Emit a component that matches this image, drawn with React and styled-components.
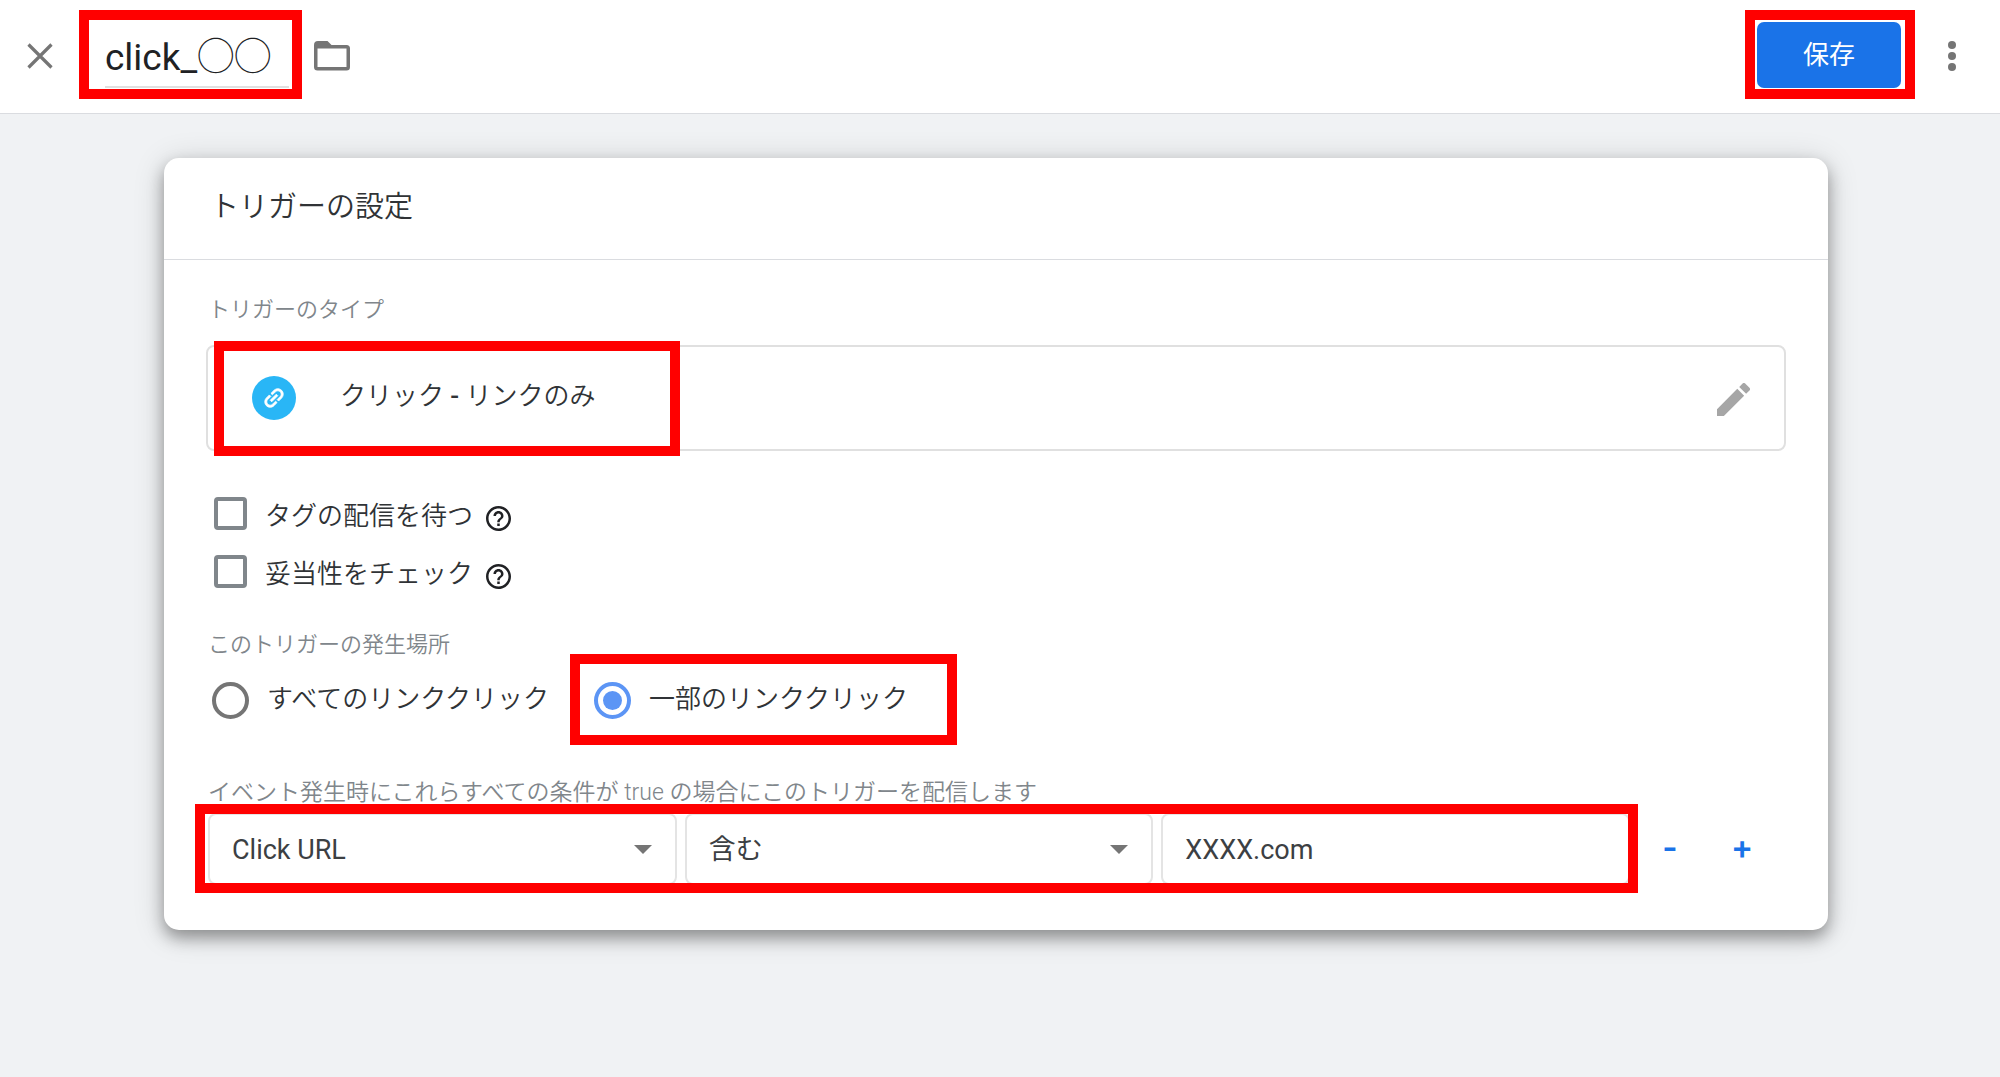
import React from "react";
import styled, { createGlobalStyle } from 'styled-components'

const GlobalStyle = createGlobalStyle`
  * {
    box-sizing: border-box;
  }
  body {
    margin: 0;
    background: #f0f2f4;
    color: #303336;
    font-family: Roboto, "Noto Sans CJK JP", sans-serif;
    font-size: 26px;
    font-weight: 350;
    line-height: 36px;
  }
  button, input, select {
    margin: 0;
    font: inherit;
    color: inherit;
  }
`

/* red frame drawn over whatever it wraps */
const Marked = styled.div`
  position: relative;
  display: flex;
  align-items: center;

  &::after {
    content: '';
    position: absolute;
    inset: ${({ $inset }) => $inset};
    border: 10px solid #ff0000;
    pointer-events: none;
  }
`

const TopBar = styled.header`
  display: flex;
  align-items: center;
  justify-content: space-between;
  height: 114px;
  padding: 0 30px 4px 22px;
  background: #fff;
  border-bottom: 1px solid #dadce0;
`

const BarGroup = styled.div`
  display: flex;
  align-items: center;
`

const IconButton = styled.button`
  display: flex;
  align-items: center;
  justify-content: center;
  width: 36px;
  height: 44px;
  padding: 2px 0 0;
  border: 0;
  background: none;
  color: #757575;
`

const NameInput = styled.input`
  width: 184px;
  height: 66px;
  padding: 0;
  border: 0;
  border-bottom: 2px solid #e0e0e0;
  outline: 0;
  background: none;
  color: #202124;
  font-size: 37px;
  font-weight: 400;
`

const NameBox = styled(Marked)`
  margin: 0 25px 0 47px;
`

const SaveBox = styled(Marked)`
  margin-right: 33px;
`

const SaveButton = styled.button`
  width: 144px;
  height: 66px;
  padding: 0;
  border: 0;
  border-radius: 7px;
  background: #1a73e8;
  color: #fff;
  font-weight: 400;
`

const Main = styled.main`
  padding: 44px 172px 44px 164px;
`

const Card = styled.section`
  border-radius: 15px;
  background: #fff;
  box-shadow: 0 8px 16px rgba(0, 0, 0, 0.34), 0 4px 32px rgba(0, 0, 0, 0.16);
`

const CardTitle = styled.h1`
  margin: 0;
  padding: 31px 46px 34px;
  border-bottom: 1px solid #dadce0;
  font-size: 29px;
  font-weight: 350;
`

const CardBody = styled.div`
  padding: 34px 42px 45px;
`

const Caption = styled.div`
  padding-left: 2px;
  color: #80868b;
  font-size: 22px;
  line-height: 32px;
`

const Prompt = styled(Caption)`
  font-size: 23px;
`

const TypeBox = styled.div`
  display: flex;
  align-items: center;
  justify-content: space-between;
  height: 106px;
  margin: 19px 0 33px;
  padding: 0 33px 0 44px;
  border: 2px solid #e0e0e0;
  border-radius: 8px;
`

const TypeBadge = styled(Marked)`
  gap: 44px;
  height: 96px;
  width: 420px;
`

const TypeName = styled.span`
  padding-bottom: 4px;
`

const Dash = styled.span`
  font-weight: 500;
`

const Badge = styled.span`
  display: flex;
  align-items: center;
  justify-content: center;
  width: 44px;
  height: 44px;
  border-radius: 50%;
  background: #29b6f6;
`

const CheckRow = styled.div`
  display: flex;
  align-items: center;
  height: 58px;
  padding-left: 8px;
`

const OptionLabel = styled.label`
  display: flex;
  align-items: center;
  gap: 18px;
`

const CheckText = styled.span`
  padding-top: 6px;
`

const RadioText = styled.span`
  padding-bottom: 2px;
`

const Checkbox = styled.input`
  appearance: none;
  width: 33px;
  height: 33px;
  border: 4px solid #80868b;
  border-radius: 4px;
`

const HelpButton = styled(IconButton)`
  width: 30px;
  margin-left: 10px;
  padding-top: 10px;
  color: #202124;
`

const Fieldset = styled.fieldset`
  margin: 29px 0 55px;
  padding: 0;
  border: 0;
`

const RadioRow = styled.div`
  display: flex;
  align-items: center;
  gap: 45px;
  height: 44px;
  margin-top: 17px;
  padding-left: 6px;
`

const Radio = styled.input`
  appearance: none;
  display: grid;
  place-items: center;
  width: 37px;
  height: 37px;
  border: 4px solid #757575;
  border-radius: 50%;

  &:checked {
    border-color: #5c95f5;
  }
  &:checked::before {
    content: '';
    width: 19px;
    height: 19px;
    border-radius: 50%;
    background: #5c95f5;
  }
`

const ConditionRow = styled.div`
  display: flex;
  align-items: center;
  gap: 4px;
  margin-top: 4px;
  padding: 0 8px 0 2px;
`

const Fields = styled(Marked)`
  flex: 1;
  gap: 8px;
`

const Field = styled.div`
  display: grid;
  flex: 1;
  align-items: center;

  > * {
    grid-area: 1 / 1;
  }
  > svg {
    justify-self: end;
    margin-right: 25px;
    pointer-events: none;
  }
`

const controlStyle = `
  appearance: none;
  width: 100%;
  height: 72px;
  padding: 2px 22px 0;
  border: 2px solid #e4e4e4;
  border-radius: 8px;
  outline: 0;
  background: #fff;
  color: #3c4043;
  font-size: 27px;
  font-weight: 400;
`

const Select = styled.select`${controlStyle}`
const TextInput = styled.input`${controlStyle}`

const RowButton = styled.button`
  width: 72px;
  height: 72px;
  padding: 0 0 4px;
  border: 0;
  background: none;
  color: #1a73e8;
  font-family: Inter, sans-serif;
  font-size: 33px;
  font-weight: 600;
`

const CloseIcon = () => (
  <svg width="26" height="26" viewBox="0 0 26 26" stroke="currentColor" strokeWidth="3.2">
    <path d="M1.5 1.5 24.5 24.5M24.5 1.5 1.5 24.5" />
  </svg>
)

const FolderIcon = () => (
  <svg width="36" height="30" viewBox="0 0 36 30" fill="currentColor">
    <path fillRule="evenodd" d="M4 0H13.5L17.500 4H32.500Q36 4 36 7.500V26Q36 29.500 32.500 29.500H3.500Q0 29.500 0 26V4Q0 0 4 0ZM3.500 7.500V26H32.500V7.500Z" />
  </svg>
)

const MoreIcon = () => (
  <svg width="10" height="32" viewBox="0 0 10 32" fill="currentColor">
    <circle cx="5" cy="5" r="4" />
    <circle cx="5" cy="16" r="4" />
    <circle cx="5" cy="27" r="4" />
  </svg>
)

const LinkIcon = () => (
  <svg width="26" height="26" viewBox="0 0 24 24" fill="#fff" stroke="#fff" strokeWidth="0.7">
    <path transform="rotate(-45 12 12)" d="M3.900 12c0-1.710 1.390-3.100 3.100-3.100h4V7H7c-2.760 0-5 2.240-5 5s2.240 5 5 5h4v-1.900H7c-1.710 0-3.100-1.390-3.100-3.100zM8 13h8v-2H8v2zm9-6h-4v1.900h4c1.710 0 3.100 1.390 3.100 3.100s-1.390 3.100-3.100 3.100h-4V17h4c2.760 0 5-2.240 5-5s-2.240-5-5-5z" />
  </svg>
)

const PencilIcon = () => (
  <svg width="33" height="33" viewBox="3 3 18 18" fill="#a6a6a6">
    <path d="M3 17.250V21h3.750L17.810 9.940l-3.750-3.750L3 17.250zM20.710 7.040a1 1 0 0 0 0-1.410l-2.340-2.340a1 1 0 0 0-1.410 0l-1.830 1.830 3.750 3.750 1.830-1.830z" />
  </svg>
)

const HelpIcon = () => (
  <svg width="25" height="25" viewBox="2 2 20 20" fill="currentColor">
    <path d="M11 18h2v-2h-2v2zm1-16C6.480 2 2 6.480 2 12s4.480 10 10 10 10-4.480 10-10S17.520 2 12 2zm0 18c-4.410 0-8-3.590-8-8s3.590-8 8-8 8 3.590 8 8-3.590 8-8 8zm0-14c-2.210 0-4 1.790-4 4h2c0-1.100.9-2 2-2s2 .9 2 2c0 2-3 1.750-3 5h2c0-2.250 3-2.500 3-5 0-2.210-1.790-4-4-4z" />
  </svg>
)

const ArrowIcon = () => (
  <svg width="18" height="9" viewBox="0 0 18 9" fill="#757575">
    <path d="M0 0H18L9 9Z" />
  </svg>
)

const checks = [
  { id: 'wait-for-tags', text: 'タグの配信を待つ' },
  { id: 'check-validation', text: '妥当性をチェック' },
]

const App = () => {
  const [name, setName] = React.useState('click_◯◯')
  const [scope, setScope] = React.useState('some')
  const [value, setValue] = React.useState('XXXX.com')

  return (
    <>
      <GlobalStyle />
      <TopBar>
        <BarGroup>
          <IconButton aria-label="閉じる"><CloseIcon /></IconButton>
          <NameBox $inset="-12px -13px -11px -26px">
            <NameInput aria-label="トリガー名" value={name} onChange={e => setName(e.target.value)} />
          </NameBox>
          <IconButton aria-label="フォルダ"><FolderIcon /></IconButton>
        </BarGroup>
        <BarGroup>
          <SaveBox $inset="-12px -14px -11px -12px">
            <SaveButton>保存</SaveButton>
          </SaveBox>
          <IconButton aria-label="その他"><MoreIcon /></IconButton>
        </BarGroup>
      </TopBar>

      <Main>
        <Card>
          <CardTitle>トリガーの設定</CardTitle>
          <CardBody>
            <Caption>トリガーのタイプ</Caption>
            <TypeBox>
              <TypeBadge $inset="-9px -8px -10px -38px">
                <Badge><LinkIcon /></Badge>
                <TypeName>クリック <Dash>-</Dash> リンクのみ</TypeName>
              </TypeBadge>
              <IconButton aria-label="編集"><PencilIcon /></IconButton>
            </TypeBox>

            {checks.map(({ id, text }) => (
              <CheckRow key={id}>
                <OptionLabel htmlFor={id}>
                  <Checkbox type="checkbox" id={id} />
                  <CheckText>{text}</CheckText>
                </OptionLabel>
                <HelpButton aria-label="ヘルプ"><HelpIcon /></HelpButton>
              </CheckRow>
            ))}

            <Fieldset>
              <Caption as="legend">このトリガーの発生場所</Caption>
              <RadioRow>
                <OptionLabel>
                  <Radio type="radio" name="scope" checked={scope === 'all'} onChange={() => setScope('all')} />
                  <RadioText>すべてのリンククリック</RadioText>
                </OptionLabel>
                <Marked $inset="-27px -49px -26px -24px">
                  <OptionLabel>
                    <Radio type="radio" name="scope" checked={scope === 'some'} onChange={() => setScope('some')} />
                    <RadioText>一部のリンククリック</RadioText>
                  </OptionLabel>
                </Marked>
              </RadioRow>
            </Fieldset>

            <Prompt>イベント発生時にこれらすべての条件が true の場合にこのトリガーを配信します</Prompt>
            <ConditionRow>
              <Fields $inset="-9px -8px -8px -13px">
                <Field>
                  <Select aria-label="変数"><option>Click URL</option></Select>
                  <ArrowIcon />
                </Field>
                <Field>
                  <Select aria-label="演算子"><option>含む</option></Select>
                  <ArrowIcon />
                </Field>
                <Field>
                  <TextInput aria-label="値" value={value} onChange={e => setValue(e.target.value)} />
                </Field>
              </Fields>
              <BarGroup>
                <RowButton aria-label="条件を削除">-</RowButton>
                <RowButton aria-label="条件を追加">+</RowButton>
              </BarGroup>
            </ConditionRow>
          </CardBody>
        </Card>
      </Main>
    </>
  )
}

export default App;
